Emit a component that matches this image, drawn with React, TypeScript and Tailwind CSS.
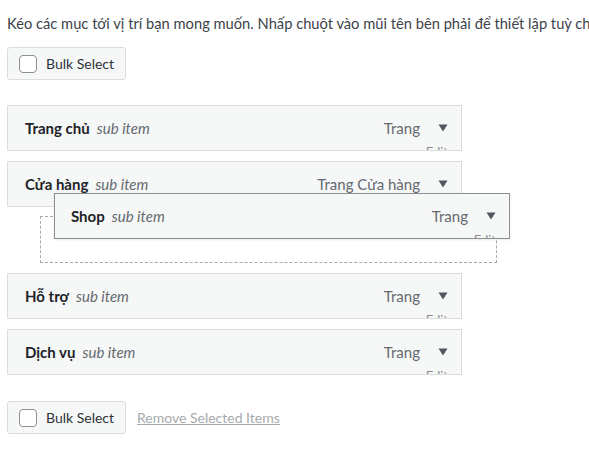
import React from "react";

const font = { fontFamily: 'Lato, "Noto Sans", sans-serif' };

function Caret() {
  return (
    <svg width="10" height="8" viewBox="0 0 10 8" className="shrink-0">
      <path d="M0.5 0.5 H9.5 L5 7.5 Z" fill="#50575e" />
    </svg>
  );
}

function Item({ title, type }: { title: string; type: string }) {
  return (
    <div className="relative h-[46px] w-[455px] overflow-hidden border border-[#dcdcde] bg-[#f6f7f7]">
      <div className="flex h-full items-center pl-[17px] pr-[13px]">
        <span className="font-bold text-[#1d2327]">{title}</span>
        <span className="ml-[7px] italic text-[#646970]">sub item</span>
        <span className="ml-auto text-[#646970]">{type}</span>
        <span className="ml-[18px]">
          <Caret />
        </span>
      </div>
      <span className="absolute right-[13px] top-[40px] text-[13px] leading-none text-[#8c8f94]">Edit</span>
    </div>
  );
}

function BulkButton() {
  return (
    <div className="flex h-[33px] w-[119px] items-center rounded-[3px] border border-[#dcdcde] bg-[#f6f7f7] pl-[11px]">
      <span className="h-[18px] w-[18px] rounded-[4px] border border-[#8c8f94] bg-white" />
      <span className="ml-[9px] text-[14px] text-[#2c3338]">Bulk Select</span>
    </div>
  );
}

export default function App() {
  return (
    <div className="w-[589px] h-[456px] overflow-hidden bg-white pl-[7px] text-[15px] leading-[20px]" style={font}>
      <p className="mt-[13px] whitespace-nowrap text-[14.7px] text-[#3c434a]">
        Kéo các mục tới vị trí bạn mong muốn. Nhấp chuột vào mũi tên bên phải để thiết lập tuỳ chỉnh thêm.
      </p>
      <div className="mt-[14px]">
        <BulkButton />
      </div>
      <div className="relative mt-[25px] flex flex-col">
        <Item title="Trang chủ" type="Trang" />
        <div className="mt-[10px]">
          <Item title="Cửa hàng" type="Trang Cửa hàng" />
        </div>
        <div className="ml-[33px] mt-[9px] h-[47px] w-[457px] border border-dashed border-[#a7aaad]" />
        <div className="mt-[10px]">
          <Item title="Hỗ trợ" type="Trang" />
        </div>
        <div className="mt-[10px]">
          <Item title="Dịch vụ" type="Trang" />
        </div>
        <div className="absolute left-[47px] top-[88px] shadow-[0_1px_2px_rgba(0,0,0,0.08)]">
          <div className="relative h-[46px] w-[456px] overflow-hidden border border-[#8c8f94] bg-[#f6f7f7]">
            <div className="flex h-full items-center pl-[16px] pr-[13px]">
              <span className="font-bold text-[#1d2327]">Shop</span>
              <span className="ml-[7px] italic text-[#646970]">sub item</span>
              <span className="ml-auto text-[#646970]">Trang</span>
              <span className="ml-[18px]">
                <Caret />
              </span>
            </div>
            <span className="absolute right-[13px] top-[40px] text-[13px] leading-none text-[#8c8f94]">Edit</span>
          </div>
        </div>
      </div>
      <div className="mt-[26px] flex items-center">
        <BulkButton />
        <span className="ml-[11px] text-[14px] text-[#a7aaad] underline">Remove Selected Items</span>
      </div>
    </div>
  );
}
